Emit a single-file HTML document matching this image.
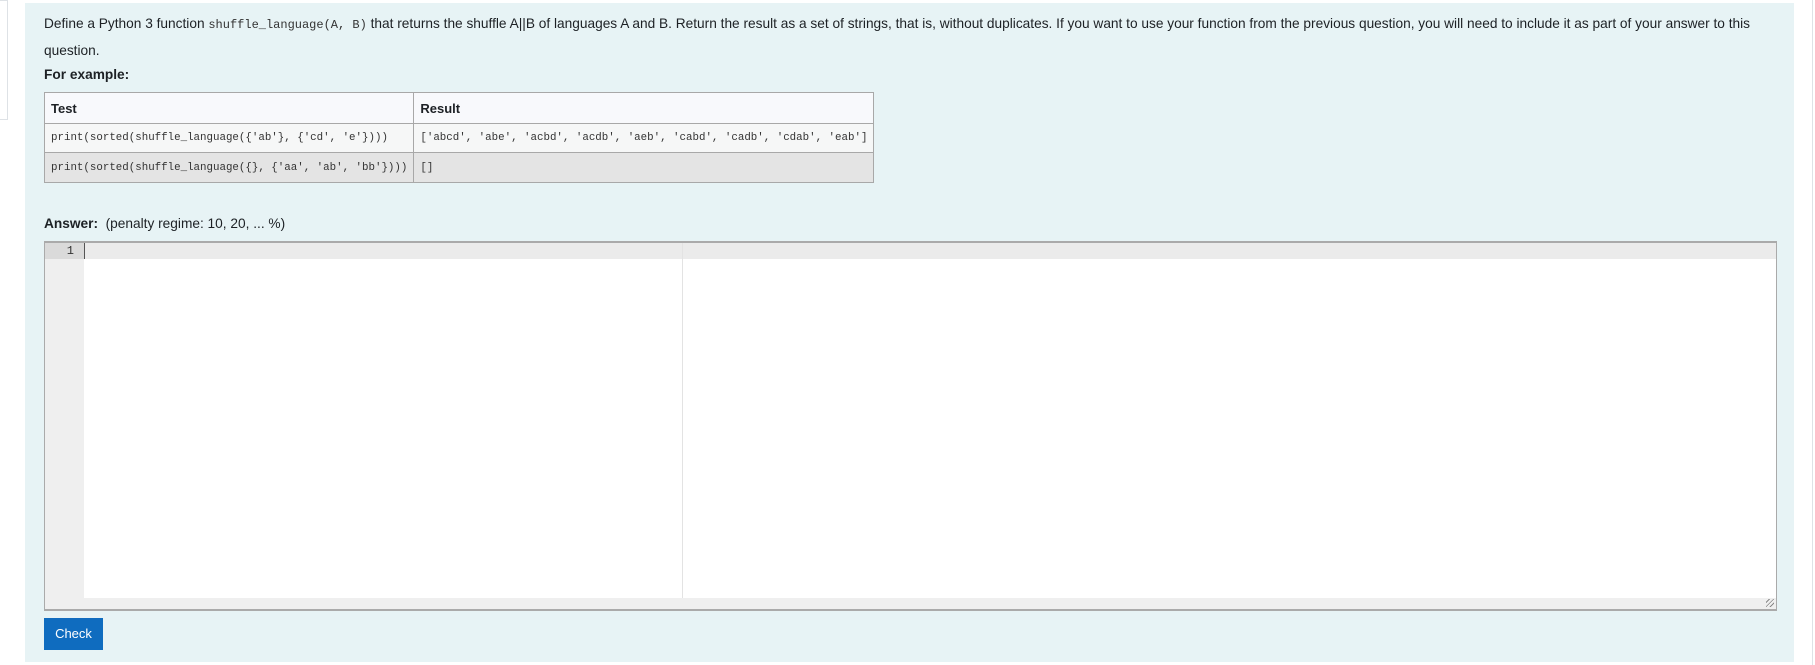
<!DOCTYPE html>
<html><head><meta charset="utf-8"><style>
*{box-sizing:border-box;margin:0;padding:0}
body{width:1815px;height:665px;background:#fff;font-family:"Liberation Sans",sans-serif;color:#1d2125;position:relative;overflow:hidden}
.lbox{position:absolute;left:-1px;top:0;width:9px;height:120px;border:1px solid #dee2e6;border-left:none}
.rline{position:absolute;left:1812px;top:0;width:1px;height:665px;background:#dee2e6}
.panel{position:absolute;left:25px;top:3px;width:1769px;height:659px;background:#e7f3f5}
.p1{position:absolute;left:44px;top:11px;font-size:13.7px;line-height:25px;white-space:nowrap}
code{font-family:"Liberation Mono",monospace;font-size:12px;color:#333}
.fe{position:absolute;left:44px;top:67px;font-size:13.7px;font-weight:bold}
table{position:absolute;left:44px;top:92px;width:829px;border-collapse:collapse;font-size:13px}
td,th{border:1px solid #a8a8a8;text-align:left;padding:0 6px;font-family:"Liberation Mono",monospace;font-size:10.8px;color:#333;white-space:nowrap}
th{font-family:"Liberation Sans",sans-serif;font-size:13px;font-weight:bold;color:#1d2125;background:#f8f9fc;height:31px}
tr.r1 td{background:#f6f7f7;height:29px}
tr.r2 td{background:#e4e4e4;height:30px}
.ans{position:absolute;left:44px;top:216px;font-size:13.7px}
.ed{position:absolute;left:44px;top:241px;width:1733px;height:370px;border:1px solid #aaa;border-width:2px 1px 2px 1px;background:#efefef}
.gut{position:absolute;left:0;top:0;width:39px;height:355px;background:#efefef}
.ln{position:absolute;left:0;top:0;width:39px;height:16px;background:#dadada;font-family:"Liberation Mono",monospace;font-size:12px;text-align:right;padding-right:10px;line-height:16px;color:#333}
.code{position:absolute;left:39px;top:16px;width:1692px;height:339px;background:#fff}
.cur{position:absolute;left:39px;top:0;width:1692px;height:16px;background:#ebebeb;border-left:1px solid #555}
.div{position:absolute;left:637px;top:0;width:1px;height:355px;background:#e3e3e3}
.rs{position:absolute;right:2px;bottom:2px;width:8px;height:8px;background:repeating-linear-gradient(135deg,transparent 0 2px,#888 2px 3px)}
.btn{position:absolute;left:44px;top:618px;width:59px;height:32px;background:#0f6cbf;color:#fff;font-size:13px;text-align:center;line-height:32px}
</style></head><body>
<div class="lbox"></div>
<div class="rline"></div>
<div class="panel"></div>
<div class="p1">Define a Python 3 function <code>shuffle_language(A, B)</code> that returns the shuffle A||B of languages A and B. Return the result as a set of strings, that is, without duplicates. If you want to use your function from the previous question, you will need to include it as part of your answer to this<br>question.</div>
<div class="fe">For example:</div>
<table>
<tr><th style="width:369px">Test</th><th>Result</th></tr>
<tr class="r1"><td>print(sorted(shuffle_language({'ab'}, {'cd', 'e'})))</td><td>['abcd', 'abe', 'acbd', 'acdb', 'aeb', 'cabd', 'cadb', 'cdab', 'eab']</td></tr>
<tr class="r2"><td>print(sorted(shuffle_language({}, {'aa', 'ab', 'bb'})))</td><td>[]</td></tr>
</table>
<div class="ans"><b>Answer:</b>&nbsp; (penalty regime: 10, 20, ... %)</div>
<div class="ed">
<div class="gut"></div>
<div class="code"></div>
<div class="cur"></div>
<div class="ln">1</div>
<div class="div"></div>
<div class="rs"></div>
</div>
<div class="btn">Check</div>
</body></html>
